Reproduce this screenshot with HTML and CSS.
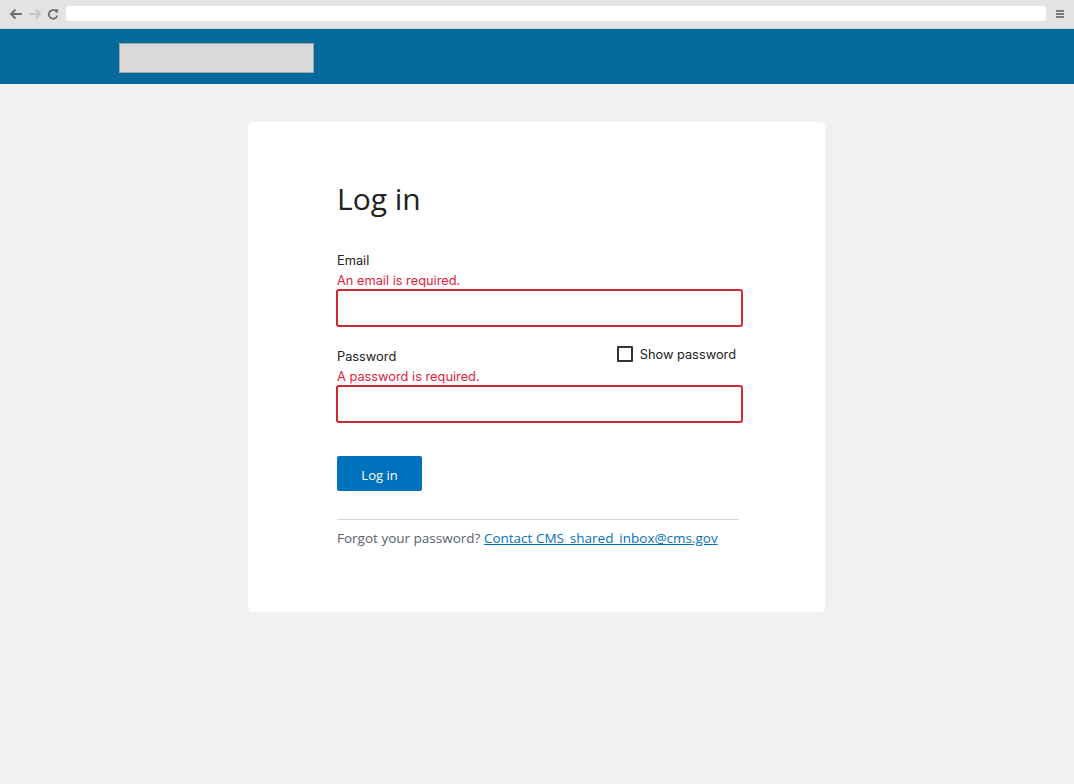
FILE: index.html
```html
<!DOCTYPE html>
<html>
<head>
<meta charset="utf-8">
<link rel="stylesheet" href="styles.css">
</head>
<body>
<div class="chrome">
  <div class="nav">
    <svg width="14" height="12" viewBox="0 0 14 12"><path d="M13 6H2M6.5 1.5L2 6l4.5 4.5" fill="none" stroke="#6f6f6f" stroke-width="1.8"/></svg>
    <svg width="14" height="12" viewBox="0 0 14 12"><path d="M1 6h11M7.5 1.5L12 6l-4.5 4.5" fill="none" stroke="#c4c4c4" stroke-width="1.8"/></svg>
    <svg width="12" height="12" viewBox="0 0 12 12"><path d="M10 4.5A4.3 4.3 0 1 0 10.3 7.5" fill="none" stroke="#6f6f6f" stroke-width="1.8"/><path d="M7.5 1.2h3.6v3.6z" fill="#6f6f6f"/></svg>
  </div>
  <div class="address"></div>
  <div class="menu"><span></span><span></span><span></span></div>
</div>
<header class="topbar">
  <div class="logo-box"></div>
</header>
<main class="page">
  <section class="card">
    <div class="form">
      <h1 class="title">Log in</h1>
      <div class="field">
        <div class="label-row"><span class="label">Email</span></div>
        <div class="error">An email is required.</div>
        <div class="input"></div>
      </div>
      <div class="field">
        <div class="label-row">
          <span class="label">Password</span>
          <span class="show"><span class="check"></span>Show password</span>
        </div>
        <div class="error">A password is required.</div>
        <div class="input"></div>
      </div>
      <button class="btn">Log in</button>
      <div class="divider"></div>
      <p class="forgot">Forgot your password? <a href="#">Contact CMS_shared_inbox@cms.gov</a></p>
    </div>
  </section>
</main>
</body>
</html>
```
FILE: styles.css
```css
* { box-sizing: border-box; }
html, body { margin: 0; padding: 0; }
body {
  background: #f1f1f1;
  font-family: "Open Sans", "Liberation Sans", sans-serif;
  color: #212121;
  height: 784px;
  overflow: hidden;
}
.chrome {
  height: 29px;
  background: #e3e3e3;
  display: flex;
  align-items: center;
  padding: 0 0 1px 9px;
  border-bottom: 1px solid #d0d0d0;
}
.nav { display: flex; align-items: center; gap: 5px; width: 57px; }
.nav svg { display: block; }
.address {
  flex: 1;
  height: 15px;
  background: #fff;
  border-radius: 3px;
}
.menu {
  width: 28px;
  display: flex;
  flex-direction: column;
  align-items: center;
  gap: 1px;
}
.menu span { width: 8px; height: 2px; background: #7a7a7a; display: block; }
.topbar {
  height: 55px;
  background: #036a9b;
  padding: 14px 0 0 119px;
}
.logo-box {
  width: 195px;
  height: 30px;
  background: #d9d9d9;
  border: 1px solid #a4a4a4;
}
.page {
  padding-top: 38px;
  display: flex;
  justify-content: center;
  padding-right: 1px;
}
.card {
  width: 577px;
  height: 490px;
  background: #fff;
  border-radius: 5px;
  padding: 56px 0 0 88px;
}
.form { width: 407px; }
.title {
  margin: 0 0 30px 1px;
  font-weight: 400;
  font-size: 30px;
  line-height: 42px;
  color: #212121;
}
.field { margin-bottom: 19px; }
.label-row {
  display: flex;
  justify-content: space-between;
  align-items: flex-end;
  height: 20px;
  padding-left: 1px;
}
.label, .show, .error {
  font-family: Inter, "Noto Sans", sans-serif;
  font-size: 12.8px;
}
.label { color: #212121; line-height: 18px; }
.show {
  display: flex;
  align-items: center;
  gap: 7px;
  color: #212121;
  margin-right: 7px;
  position: relative;
  top: -4px;
}
.check {
  width: 16px;
  height: 16px;
  border: 2px solid #333;
  border-radius: 1px;
  display: inline-block;
}
.error {
  color: #e31c3d;
  line-height: 18px;
  margin: 2px 0 -1px 1px;
}
.input {
  width: 407px;
  height: 38px;
  border: 2px solid #d12a35;
  border-radius: 3px;
  background: #fff;
}
.btn {
  display: block;
  margin: 33px 0 0 1px;
  width: 85px;
  height: 35px;
  background: #0071bc;
  color: #fff;
  border: none;
  border-radius: 2px;
  font-family: "Open Sans", sans-serif;
  font-size: 13px;
  padding: 2px 0 0 0;
}
.divider {
  margin: 28px 0 0 1px;
  width: 402px;
  height: 1px;
  background: #d6d6d6;
}
.forgot {
  margin: 9px 0 0 1px;
  font-size: 13.5px;
  line-height: 18px;
  color: #5b616b;
}
.forgot a { color: #0071bc; text-decoration: underline; }
```
